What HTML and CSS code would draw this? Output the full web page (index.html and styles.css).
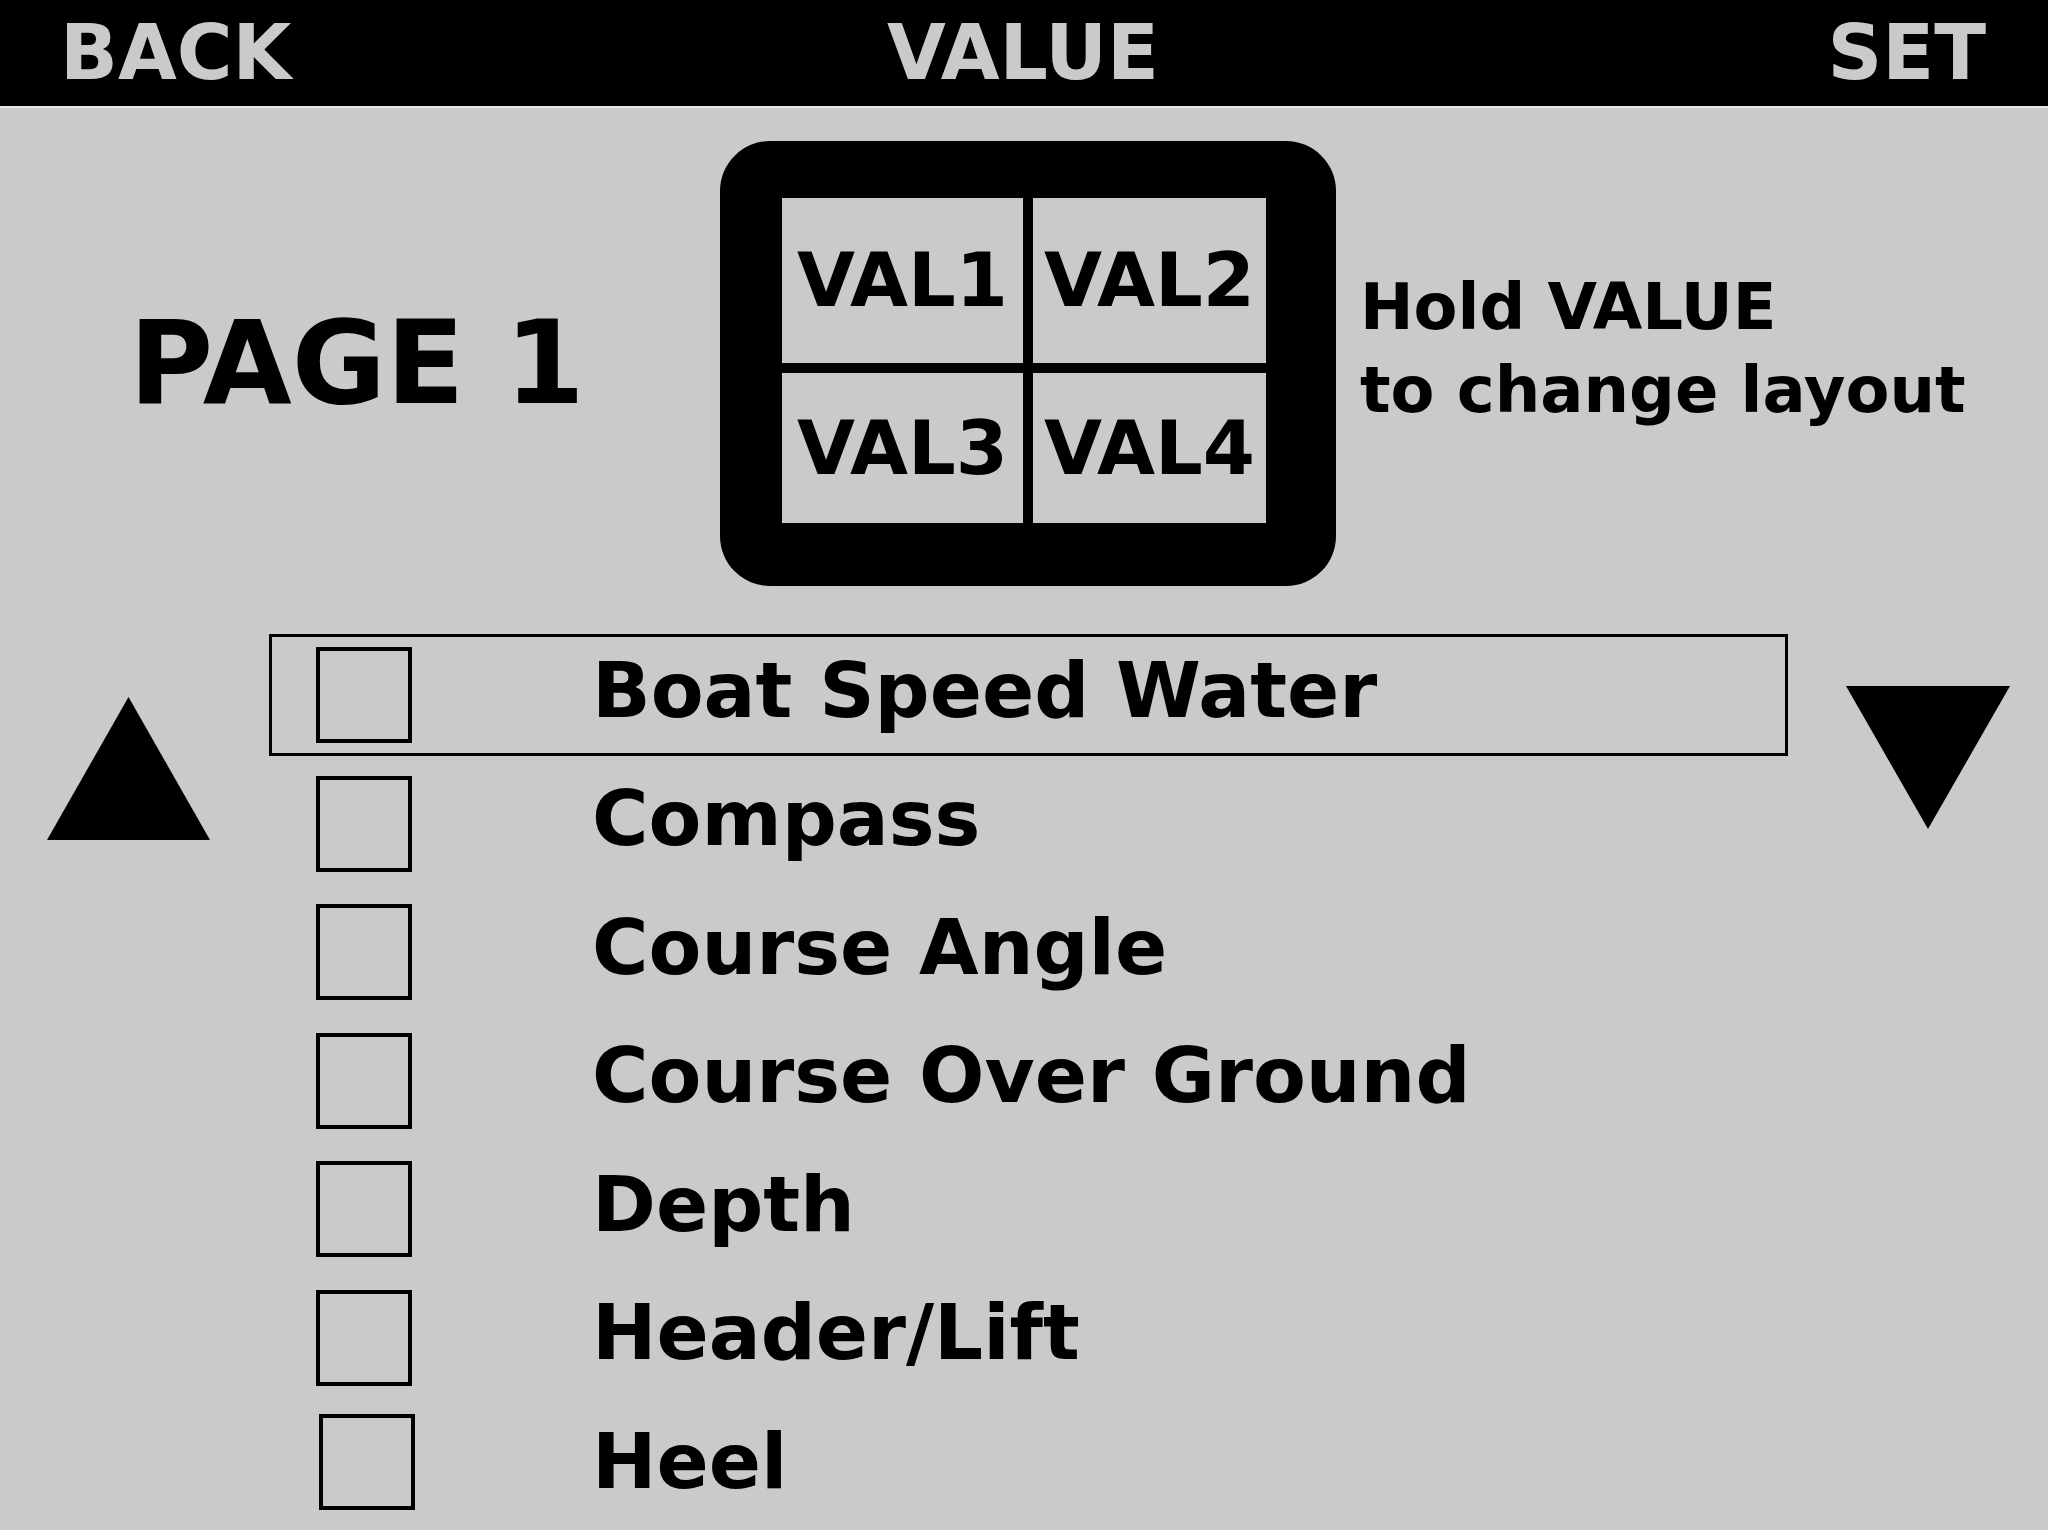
FILE: index.html
```html
<!DOCTYPE html>
<html lang="en">
<head>
  <meta charset="UTF-8">
  <meta name="viewport" content="width=device-width, initial-scale=1.0">
  <title>Page Layout - Value</title>
  <link rel="stylesheet" href="styles.css">
</head>
<body>
  <!-- Top button bar -->
  <header class="topbar">
    <span class="btn-left">BACK</span>
    <span class="btn-center">VALUE</span>
    <span class="btn-right">SET</span>
  </header>

  <!-- Page title + layout preview -->
  <section class="overview">
    <h1 class="page-title">PAGE 1</h1>
    <div class="layout-frame">
      <div class="layout-grid">
        <div class="cell">VAL1</div>
        <div class="cell">VAL2</div>
        <div class="cell">VAL3</div>
        <div class="cell">VAL4</div>
      </div>
    </div>
    <p class="hint">Hold VALUE<br>to change layout</p>
  </section>

  <!-- Value list -->
  <section class="picker">
    <div class="scroll scroll-up">
      <svg width="163" height="143" viewBox="0 0 163 143"><polygon points="81.5,0 163,143 0,143" fill="#000"/></svg>
    </div>

    <ul class="rows">
      <li class="row selected"><span class="check"></span><span class="label">Boat Speed Water</span></li>
      <li class="row"><span class="check"></span><span class="label">Compass</span></li>
      <li class="row"><span class="check"></span><span class="label">Course Angle</span></li>
      <li class="row"><span class="check"></span><span class="label">Course Over Ground</span></li>
      <li class="row"><span class="check"></span><span class="label">Depth</span></li>
      <li class="row"><span class="check"></span><span class="label">Header/Lift</span></li>
      <li class="row"><span class="check nudge"></span><span class="label">Heel</span></li>
    </ul>

    <div class="scroll scroll-down">
      <svg width="164" height="143" viewBox="0 0 164 143"><polygon points="0,0 164,0 82,143" fill="#000"/></svg>
    </div>
  </section>
</body>
</html>
```

FILE: styles.css
```css
/* Base */
html, body {
  margin: 0;
  padding: 0;
  overflow: hidden;
}

body {
  background-color: #cacaca;
  color: #000;
  font-family: "DejaVu Sans", "Liberation Sans", sans-serif;
  font-weight: bold;
}

/* Top bar */
.topbar {
  display: grid;
  grid-template-columns: 1fr auto 1fr;
  align-items: center;
  height: 106px;
  padding: 0 62px 0 60px;
  background-color: #000;
  border-bottom: 2px solid #e6e6e6;
  color: #cacaca;
  font-size: 76px;
  line-height: 106px;
}

.btn-left {
  justify-self: start;
}

.btn-right {
  justify-self: end;
}

/* Title + layout preview */
.overview {
  display: flex;
  align-items: center;
  padding-top: 33px;
}

.page-title {
  flex: 0 0 720px;
  box-sizing: border-box;
  margin: 0;
  padding-left: 129px;
  font-size: 115px;
  line-height: 1;
}

.layout-frame {
  flex: none;
  box-sizing: border-box;
  width: 616px;
  height: 445px;
  border-style: solid;
  border-color: #000;
  border-width: 57px 70px 63px 62px;
  border-radius: 50px;
  background-color: #000;
}

.layout-grid {
  display: grid;
  grid-template-columns: 241px 233px;
  grid-template-rows: 165px 150px;
  gap: 10px;
}

.cell {
  display: flex;
  align-items: center;
  justify-content: center;
  background-color: #cacaca;
  font-size: 75px;
  line-height: 1;
}

.hint {
  align-self: flex-start;
  margin: 125px 0 0 24px;
  font-size: 64px;
  line-height: 83px;
  white-space: nowrap;
}

/* Picker list */
.picker {
  display: flex;
  align-items: flex-start;
  margin-top: 48px;
}

.scroll {
  display: flex;
  box-sizing: border-box;
}

.scroll-up {
  flex: 0 0 269px;
  padding: 63px 0 0 47px;
}

.scroll-down {
  flex: 1;
  padding: 52px 0 0 58px;
}

.rows {
  flex: 0 0 1519px;
  display: flex;
  flex-direction: column;
  gap: 6.5px;
  margin: 0;
  padding: 0;
  list-style: none;
}

.row {
  display: flex;
  align-items: center;
  box-sizing: border-box;
  height: 122px;
  padding-left: 44px;
  border: 3px solid transparent;
}

.row.selected {
  border-color: #000;
}

.check {
  flex: none;
  box-sizing: border-box;
  width: 96px;
  height: 96px;
  border: 4px solid #000;
}

.check.nudge {
  margin: 0 -3px 8px 3px;
}

.label {
  margin: 0 0 10px 180px;
  font-size: 77px;
  line-height: 1;
  white-space: nowrap;
}
```
